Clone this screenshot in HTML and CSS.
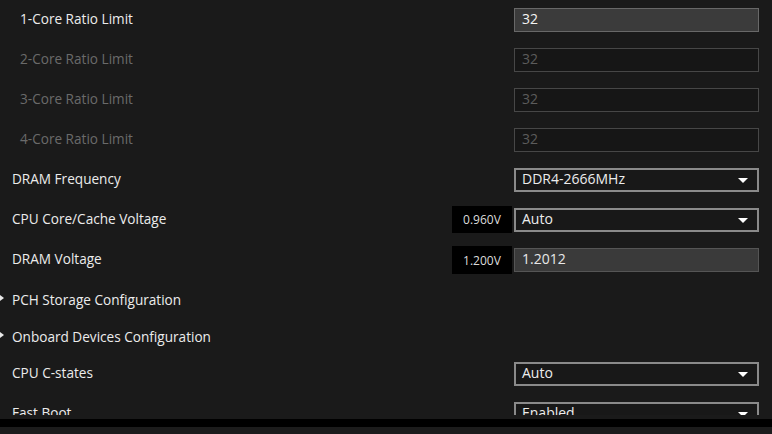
FILE: index.html
```html
<!DOCTYPE html>
<html>
<head>
<meta charset="utf-8">
<link rel="stylesheet" href="styles.css">
</head>
<body>
<div class="list">
  <div class="row">
    <div class="label sub">1-Core Ratio Limit</div>
    <div class="box active">32</div>
  </div>
  <div class="row">
    <div class="label sub disabled">2-Core Ratio Limit</div>
    <div class="box off">32</div>
  </div>
  <div class="row">
    <div class="label sub disabled">3-Core Ratio Limit</div>
    <div class="box off">32</div>
  </div>
  <div class="row">
    <div class="label sub disabled">4-Core Ratio Limit</div>
    <div class="box off">32</div>
  </div>
  <div class="row">
    <div class="label">DRAM Frequency</div>
    <div class="box select">DDR4-2666MHz<span class="caret"></span></div>
  </div>
  <div class="row">
    <div class="label">CPU Core/Cache Voltage</div>
    <div class="badge">0.960V</div>
    <div class="box select">Auto<span class="caret"></span></div>
  </div>
  <div class="row">
    <div class="label">DRAM Voltage</div>
    <div class="badge tall">1.200V</div>
    <div class="box value">1.2012</div>
  </div>
  <div class="row menu">
    <span class="tri"></span>
    <div class="label">PCH Storage Configuration</div>
  </div>
  <div class="row menu">
    <span class="tri"></span>
    <div class="label">Onboard Devices Configuration</div>
  </div>
  <div class="row">
    <div class="label">CPU C-states</div>
    <div class="box select">Auto<span class="caret"></span></div>
  </div>
  <div class="row">
    <div class="label">Fast Boot</div>
    <div class="box select">Enabled<span class="caret"></span></div>
  </div>
</div>
<div class="gap"></div>
<div class="bar"></div>
<div class="foot"></div>
</body>
</html>
```
FILE: styles.css
```css
html, body {
  margin: 0;
  padding: 0;
  background: #1a1a1a;
  font-family: "Open Sans", "Noto Sans", sans-serif;
  font-size: 13.6px;
  color: #ececec;
}

.list {
  height: 415px;
  overflow: hidden;
}

.row {
  display: flex;
  align-items: flex-start;
  height: 40px;
  position: relative;
}

.row.menu {
  height: 37px;
}

.label {
  flex: 1;
  margin-top: 9px;
  line-height: 19px;
  padding-left: 12px;
  white-space: nowrap;
}

.row.menu .label {
  margin-top: 10px;
}

.label.sub {
  padding-left: 20px;
}

.label.disabled {
  color: #6a6a6a;
}

.box {
  box-sizing: border-box;
  width: 245px;
  height: 24px;
  margin-top: 8px;
  margin-right: 13px;
  padding: 0 0 0 7px;
  line-height: 19px;
  border: 1px solid #6a6a6a;
  position: relative;
  white-space: nowrap;
  font-size: 14px;
}

.box.active {
  background: #3b3b3b;
  border-color: #686868;
  color: #f4f4f4;
}

.box.off {
  background: #161616;
  border-color: #474747;
  color: #5c5c5c;
}

.box.select {
  background: #181818;
  border: 2px solid #8a8a8a;
  padding-left: 6px;
  line-height: 18px;
  color: #ececec;
}

.box.value {
  background: #3a3a3a;
  border-color: #555555;
  color: #e8e8e8;
}

.caret {
  position: absolute;
  right: 9px;
  top: 8px;
  width: 0;
  height: 0;
  border-left: 5px solid transparent;
  border-right: 5px solid transparent;
  border-top: 5px solid #ffffff;
}

.badge {
  box-sizing: border-box;
  width: 60px;
  height: 27px;
  margin-top: 6px;
  margin-right: 2px;
  background: #000000;
  color: #dcdcdc;
  font-size: 12px;
  line-height: 27px;
  text-align: center;
}

.badge.tall {
  height: 28px;
  line-height: 29px;
}

.tri {
  position: absolute;
  left: 0;
  top: 15px;
  width: 0;
  height: 0;
  border-top: 3px solid transparent;
  border-bottom: 3px solid transparent;
  border-left: 4px solid #e8e8e8;
}

.gap {
  height: 4px;
  background: #1a1a1a;
}

.bar {
  height: 8px;
  background: #000000;
}

.foot {
  height: 7px;
  background: #1c1c1c;
}
```
